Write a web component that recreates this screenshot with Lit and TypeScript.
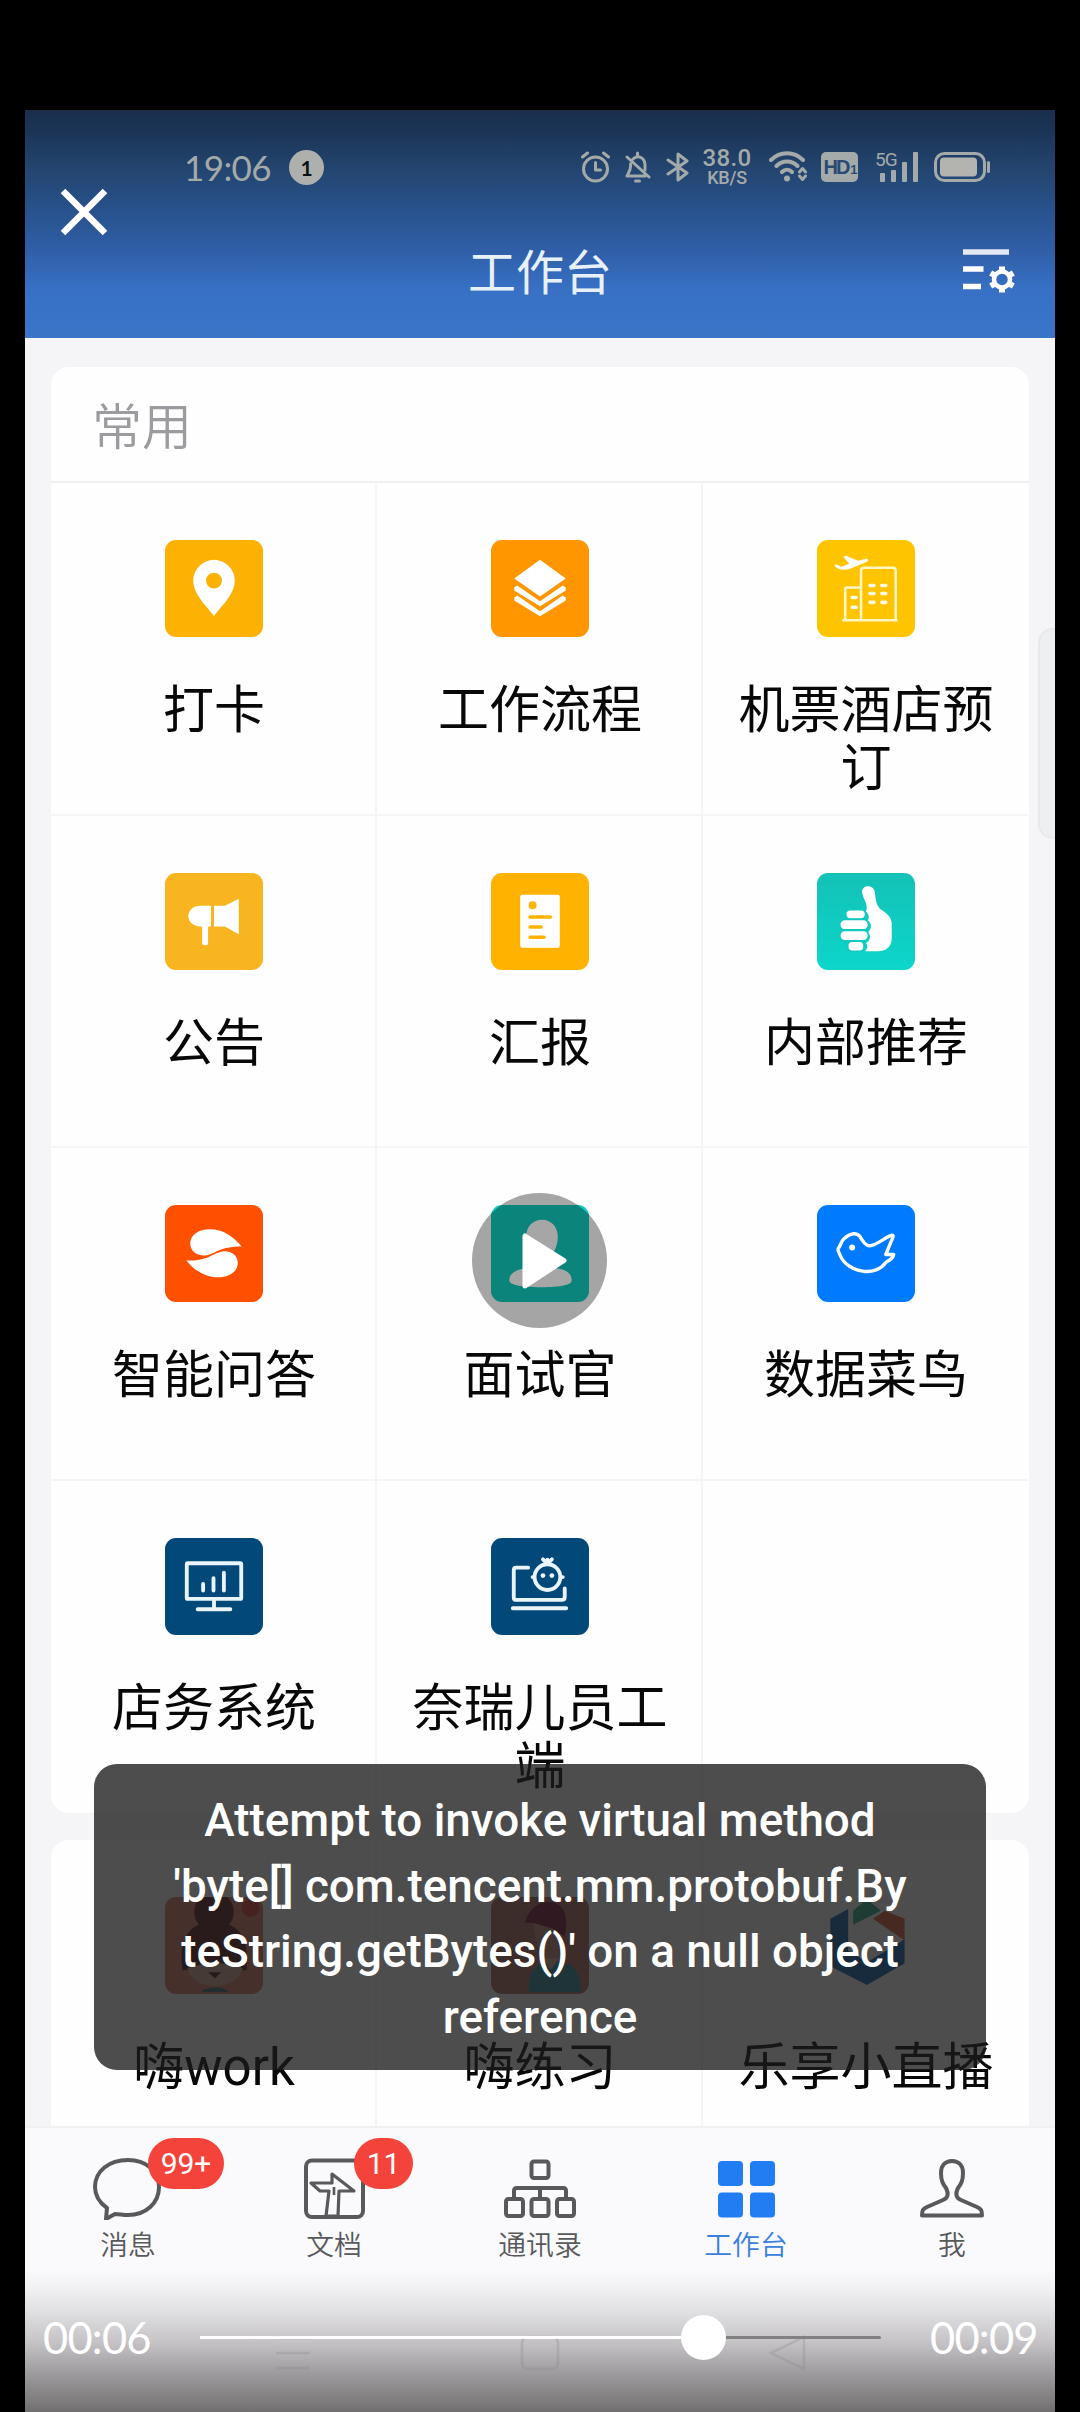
import { LitElement, html, svg, css, nothing, type SVGTemplateResult } from "lit";
import { customElement, property } from "lit/decorators.js";

type App = { label: string; bg: string; art: SVGTemplateResult };

const pin = svg`<path fill="#fff" fill-rule="evenodd" d="M49 77C44 69 28 56 28 41a21 21 0 0 1 42 0C70 56 54 69 49 77ZM49 33a8 8 0 1 0 0 16a8 8 0 0 0 0-16Z"/>`;
const layers = svg`<g fill="#fff"><path d="M49 20 75 39 49 57 23 39Z"/><path d="M23 48l3-2 23 16 23-16 3 2v3L49 67 23 51Z"/><path d="M23 58l3-2 23 16 23-16 3 2v3L49 77 23 61Z"/></g>`;
const hotel = svg`<g fill="none" stroke="#fff6c4" stroke-width="2.6"><path d="M44 80V31q0-3 3-3h29q3 0 3 3v49M28 80V50q0-2 2-2h14M25 81h56"/><path stroke="#fffbe6" stroke-width="3.6" stroke-linecap="round" d="M53 46h4M65 46h4M53 54h4M65 54h4M53 63h4M65 63h4M35 58h4M35 68h4"/></g><path fill="#fff" d="M17 25l3 0 4 2 8-3-6-7 3-1 12 5 8-2c2 0 3 1 1 3L33 29c-8 2-14 1-16-4Z"/>`;
const horn = svg`<g fill="#fff"><path d="M46 33v21H35c-7 0-12-5-12-10.500S28 33 35 33Z"/><path d="M49 33h11l14-7v36l-14-8H49Z"/><rect x="37" y="52" width="6" height="21" rx="2"/></g>`;
const report = svg`<rect x="29" y="22" width="40" height="53.500" rx="2" fill="#fff"/><g stroke="#fdb300" stroke-width="3.600" stroke-linecap="round"><path d="M39 44.500h20.500M39 54.500h11M39 65h14"/></g><circle cx="41.500" cy="32.500" r="4" fill="#fdb300"/>`;
const thumb = svg`<g fill="#fff"><path d="M45 19c0-7 12-8 13 1 1 8 1 12 6 17 8 5 11 9 11 15v14c0 8-5 13-14 13H48c3-3 3-6 1-8 5-4 5-8 2-11 4-4 4-9 0-12 2-4 0-7-2-9 3-7-3-12-4-20Z"/></g><g fill="#fff" stroke="#11c9be" stroke-width="1.600"><rect x="28.500" y="37" width="20" height="9.500" rx="4.500"/><rect x="22.500" y="47" width="29" height="10.500" rx="5"/><rect x="22.500" y="58" width="29" height="10.500" rx="5"/><rect x="30.500" y="69" width="16.500" height="10" rx="4.500"/></g>`;
const swoosh = svg`<g fill="#fff"><path d="M77 42C69 32 58 24.500 45 24.500c-12 0-20 6-20 14.500 0 8 7 12.500 15 12 10-1 14-9 37-9Z"/><path d="M21 56c8 10 19 17 32 17 12 0 20-6 20-14.500C73 50 65 46 58 47c-10 1-14 10-37 9Z"/></g>`;
const person = svg`<g fill="#fff"><path d="M51 15c-10 0-16 8-16 17 0 12 6 20 9 24 2 5-3 7-10 8-10 2-16 5-16 12 0 5 12 7 32 7s31-2 31-7c0-7-6-11-16-12-7-1-10-3-8-8 4-5 10-13 10-24 0-9-6-17-16-17Z"/></g>`;
const bird = svg`<path fill="none" stroke="#fff" stroke-width="3.400" stroke-linejoin="round" d="M21 44c2-2 3-8 6-10 5-5 12-7 16-2 3 5 6 10 11 9 8-2 14-8 20-10 2-1 3 0 2 2l-7 17 8 0c0 3-3 5-8 8-5 7-14 10-22 9-11-1-21-8-24-16-1-3-3-4-2-7Z"/><circle cx="35" cy="43" r="3" fill="#fff"/>`;
const monitor = svg`<g fill="none" stroke="#e9f5fb" stroke-width="3.900" stroke-linecap="round"><rect x="21.500" y="25.500" width="55" height="36" rx="1"/><path d="M49 62v9M32.500 72h33M38 46.500v6.500M48.500 40.500v12.500M59 35v18"/></g>`;
const laptop = svg`<g fill="none" stroke="#e9f5fb" stroke-width="3.900" stroke-linecap="round"><path d="M37 30H25q-2.500 0-2.500 2.500V60q0 2.500 2.500 2.500h46q3 0 3-3V51M21.500 71h54"/><circle cx="56.500" cy="39.500" r="13"/><path d="M56.500 26l-4.500-4.500M56.500 26l4.500-4.500M56.500 25v-3M41.500 39.500h1M71 39.500h1" /></g><circle cx="52" cy="38" r="2.400" fill="#e9f5fb"/><circle cx="61" cy="38" r="2.400" fill="#e9f5fb"/>`;
const girl = svg`<circle cx="86" cy="11" r="9" fill="#e03a30"/><circle cx="49" cy="15" r="20" fill="#5a1c1c"/><path fill="#5a1c1c" d="M17 74C12 35 30 25 49 25s37 10 33 49Z"/><path fill="#d8a890" d="M22 72q28-10 56 0c-3 11-14 18-28 18s-25-7-28-18Z"/><path fill="#4a1c1c" d="M43 76h13l-6 6Z"/><path fill="#3f6f6c" d="M36 96c4-6 24-6 28 0Z"/>`;
const coach = svg`<path fill="#c98f7c" d="M42 26h26v40H50Z"/><path fill="#7c1634" d="M34 26C38 8 56 0 68 8c10 8 8 22 6 32l-12-8-20-6Z"/><path fill="#2b8fa0" d="M38 96c-2-16 4-24 14-30h20c14 4 18 14 18 30Z"/><path fill="#d8a890" d="M52 62h16l-8 12Z"/>`;
const hexa = svg`<path fill="#0a64b8" d="M13 22l18-10v42l19 12 38-23v24L50 89 13 70Z"/><path fill="#2bb28a" d="M36 14 50 2l14 12-28 14Z"/><path fill="#e0603c" d="M56 22 68 14l20 8v22Z"/>`;

const common: App[] = [
  { label: "打卡", bg: "#fdb203", art: pin },
  { label: "工作流程", bg: "#ff9600", art: layers },
  { label: "机票酒店预订", bg: "#ffc400", art: hotel },
  { label: "公告", bg: "#f8b51f", art: horn },
  { label: "汇报", bg: "#ffb200", art: report },
  { label: "内部推荐", bg: "linear-gradient(#14c1b6, #0cd6cb)", art: thumb },
  { label: "智能问答", bg: "#ff5000", art: swoosh },
  { label: "面试官", bg: "#11ccbf", art: person },
  { label: "数据菜鸟", bg: "#007bff", art: bird },
  { label: "店务系统", bg: "#024879", art: monitor },
  { label: "奈瑞儿员工端", bg: "#024879", art: laptop },
];
const more: App[] = [
  { label: "嗨work", bg: "#d97c6a", art: girl },
  { label: "嗨练习", bg: "#b07060", art: coach },
  { label: "乐享小直播", bg: "#ffffff", art: hexa },
];

@customElement("app-tile")
class AppTile extends LitElement {
  @property({ attribute: false }) app?: App;
  static styles = css`
    :host { display: flex; flex-direction: column; align-items: center; box-sizing: border-box; padding: 57px 28px 0 30px; }
    .icon { width: 98px; height: 97px; border-radius: 11px; overflow: hidden; flex: none; }
    svg { display: block; width: 98px; height: 97px; }
    .label { width: 264px; margin-top: 45px; text-align: center; word-break: break-all; font-family: Roboto, "Noto Sans CJK SC", sans-serif; font-weight: 400; font-size: 51px; line-height: 58px; color: #080808; }
  `;
  render() {
    return this.app
      ? html`<div class="icon" style="background:${this.app.bg}"><svg viewBox="0 0 98 98">${this.app.art}</svg></div>
          <div class="label">${this.app.label}</div>`
      : nothing;
  }
}

@customElement("status-bar")
class StatusBar extends LitElement {
  static styles = css`
    :host { display: flex; align-items: center; height: 116px; padding: 0 64px 2px 159px; box-sizing: border-box; color: #a4aaa9; }
    .time { font: 400 35px/40px Lato, sans-serif; letter-spacing: -0.600px; width: 105px; }
    .count { width: 35px; height: 35px; border-radius: 50%; background: #aeb0ad; color: #0c1116; font: 700 21px/35px Lato, sans-serif; text-align: center; }
    .right { margin-left: auto; display: flex; align-items: center; }
    svg { display: block; fill: none; stroke: #a4aaa9; stroke-width: 3; stroke-linecap: round; stroke-linejoin: round; flex: none; }
    .alarm { margin-right: 15px; }
    .bell { margin-right: 15px; }
    .bt { margin-right: 12px; }
    .speed { width: 50px; text-align: center; font: 500 24px/24px Roboto, sans-serif; margin-right: 17px; display: flex; flex-direction: column; align-items: center; }
    .fast { letter-spacing: 0.300px; line-height: 22px; }
    .unit { font-size: 18px; line-height: 18px; letter-spacing: -0.300px; }
    .wifi { margin-right: 14px; }
    .hd { width: 37px; height: 30px; border-radius: 5px; background: #a4aaa9; color: #2a4a73; font: 700 20px/30px "Liberation Sans", sans-serif; letter-spacing: -2px; display: flex; justify-content: center; margin-right: 17px; }
    .one { font-size: 13px; line-height: 35px; padding-left: 2px; }
    .net { display: flex; margin-right: 15px; }
    .g5 { font: 400 19px/15px Roboto, sans-serif; letter-spacing: -1px; width: 5px; white-space: nowrap; }
    .solid { fill: #a4aaa9; stroke: none; }
    .cell { fill: #b3b4b0; stroke: none; }
  `;
  render() {
    return html`
      <span class="time">19:06</span><span class="count">1</span>
      <div class="right">
        <svg class="alarm" width="29" height="32" viewBox="0 0 29 32"><circle cx="14.500" cy="18" r="12"/><path d="M14.500 11.500V19h5M1.500 6 6.500 2M27.500 6l-5-4"/></svg>
        <svg class="bell" width="26" height="32" viewBox="0 0 26 32"><path d="M8 8C13 3 20 7 20 14v5M5.500 13c1 5-2 9-3.500 12h18M2 6l22 20M12.500 2v2M10.500 30h4"/></svg>
        <svg class="bt" width="24" height="32" viewBox="0 0 24 32"><path d="M2 9l19 13-9 7V3l9 7L2 23"/></svg>
        <div class="speed"><div class="fast">38.0</div><div class="unit">KB/S</div></div>
        <svg class="wifi" width="38" height="32" viewBox="0 0 38 32"><path stroke-width="4" d="M2 9C11 0 25 0 34 9M7.500 15c6-6 15-6 21 0M13 21c3-3 7-3 10 0"/><path d="M30.500 21l3-3.500 3 3.500M30.500 25l3 3.500 3-3.500"/><circle class="solid" cx="18" cy="27.500" r="3"/></svg>
        <div class="hd">HD<span class="one">1</span></div>
        <div class="net"><span class="g5">5G</span>
          <svg width="39" height="30" viewBox="0 0 39 30"><g class="solid"><rect x="0" y="21" width="5" height="9" rx="1"/><rect x="11" y="18" width="5" height="12" rx="1"/><rect x="22" y="10" width="5" height="20" rx="1"/><rect x="33" y="0" width="5" height="30" rx="1"/></g></svg></div>
        <svg width="57" height="30" viewBox="0 0 57 30"><rect x="1.500" y="1.500" width="49" height="27" rx="9"/><rect class="cell" x="6" y="5.500" width="37" height="19" rx="4"/><rect class="solid" x="53" y="9" width="3" height="12" rx="1.500"/></svg>
      </div>`;
  }
}

const tabs = [
  { label: "消息", badge: "99+", cls: "wide", art: svg`<path d="M37 2C55 2 68 13 68 29S55 57 37 57c-5 0-9-1-13-1l-9 5 1-11C9 45 4 38 4 29 4 13 18 2 37 2Z"/>` },
  { label: "文档", badge: "11", cls: "", art: svg`<rect x="9" y="2.500" width="57" height="56.500" rx="6"/><path stroke-width="3.200" d="M35 16 57 33H42l-1 25H29l3-25h-9l-9-8H35Z"/><path stroke-width="2.600" d="M37 29v8"/>` },
  { label: "通讯录", badge: "", cls: "", art: svg`<rect x="28.500" y="3.500" width="17" height="16.500" rx="2.500"/><path d="M11 40v-7q0-3 3-3h46q3 0 3 3v7M37 30v10"/><rect x="3" y="41" width="17" height="17" rx="2.500"/><rect x="28.500" y="41" width="17" height="17" rx="2.500"/><rect x="54" y="41" width="17" height="17" rx="2.500"/>` },
  { label: "工作台", badge: "", cls: "on", art: svg`<g fill="#227cf2" stroke="none"><rect x="9" y="3" width="25" height="25" rx="4"/><rect x="41" y="3" width="25" height="25" rx="4"/><rect x="9" y="34.500" width="25" height="25" rx="4"/><rect x="41" y="34.500" width="25" height="25" rx="4"/></g>` },
  { label: "我", badge: "", cls: "", art: svg`<path d="M37 3C29 3 26 9 26 15c0 8 2 11 5 15 3 6 2 10-3 12L12 49c-4 2-5 3-5 8.500h60C67 52 66 51 62 49L46 42c-5-2-6-6-3-12 3-4 5-7 5-15C48 9 45 3 37 3Z"/>` },
];

@customElement("app-root")
class AppRoot extends LitElement {
  static styles = css`
    :host { display: block; position: relative; width: 1080px; height: 2412px; box-sizing: border-box; padding: 110px 25px 0; background: #000; overflow: hidden; font-family: "Noto Sans CJK SC", sans-serif; font-weight: 350; }
    .screen { display: flex; flex-direction: column; height: 2302px; background: #f5f5f8; }
    .head { flex: none; height: 228px; background: linear-gradient(#1a2e4b 0, #1c3557 10%, #23456f 26%, #28528c 44%, #305fa8 62%, #3770c4 78%, #3a75c8 100%); }
    .bar { display: flex; align-items: center; height: 94px; margin-top: -2px; padding: 0 39px 0 92px; }
    .title { flex: 1; text-align: center; font-size: 48px; font-weight: 400; line-height: 60px; padding-bottom: 5px; color: #e8f0f8; }
    .feed { flex: 1; min-height: 0; overflow: hidden; display: flex; flex-direction: column; gap: 27px; padding: 29px 26px 0; }
    .card { flex: none; background: #fefefe; border-radius: 18px; overflow: hidden; }
    .sub { height: 116px; display: flex; align-items: center; padding-left: 41px; font-size: 50px; line-height: 60px; color: #9c9ca0; border-bottom: 2px solid #f0f0f0; box-sizing: border-box; padding-bottom: 2px; }
    .grid { display: grid; grid-template-columns: 326px 326px 326px; grid-auto-rows: 332.500px; }
    .tile { border-right: 2px solid #f5f5f5; border-bottom: 2px solid #f5f5f5; }
    .tile:nth-child(3n) { border-right-color: transparent; }
    .tile:nth-child(n + 10) { border-bottom-color: transparent; }
    .tabs { flex: none; height: 144px; display: grid; grid-template-columns: repeat(5, 206px); background: #fafafc; border-top: 2px solid #f1f1f4; box-sizing: border-box; }
    .tab { position: relative; display: flex; flex-direction: column; align-items: center; padding-top: 30px; color: #58595b; font-size: 27.800px; line-height: 36px; }
    .tab svg { width: 74px; height: 62px; fill: none; stroke: #58595b; stroke-width: 4; stroke-linejoin: round; margin-bottom: 5px; flex: none; }
    .on { color: #3a80dd; }
    .badge { position: absolute; top: 10px; left: 123px; width: 59px; height: 51px; border-radius: 26px; background: #f4433b; color: #fff; font: 400 30px/52px Roboto, sans-serif; text-align: center; }
    .wide .badge { width: 76px; }
    .system { flex: none; height: 142px; background: linear-gradient(#fafafc 0, #f3f2f5 10%, #e2e1e3 28%, #c6c4c6 50%, #a09ea0 71%, #7f7d7e 92%, #706e6f 100%); display: flex; justify-content: space-between; align-items: center; padding: 24px 248px 0; box-sizing: border-box; }
    .system svg { width: 40px; height: 36px; fill: none; stroke: #8a888b; stroke-opacity: 0.300; stroke-width: 2.500; }
    .side { position: absolute; top: 628px; left: 1038px; width: 17px; height: 211px; box-sizing: border-box; border: 2px solid #e8e8ea; border-right: 0; border-radius: 15px 0 0 15px; background: #eeeff1; }
    .toast { position: absolute; top: 1764px; left: 94px; width: 892px; height: 306px; box-sizing: border-box; padding-top: 24px; border-radius: 23px; background: rgba(27, 27, 27, 0.780); color: #fff; font: 500 45.800px/65.700px Roboto, sans-serif; text-align: center; white-space: nowrap; }
    .close { position: absolute; top: 187px; left: 59px; width: 50px; height: 50px; }
    .play { position: absolute; top: 1193px; left: 472px; width: 135px; height: 135px; }
    .control { position: absolute; top: 2308px; left: 25px; width: 1030px; height: 58px; box-sizing: border-box; display: flex; align-items: center; padding: 0 16px 0 18px; color: #fff; font: 400 43.500px/58px Lato, sans-serif; letter-spacing: -0.800px; }
    .clock { width: 109px; flex: none; }
    .track { flex: 1; margin: 0 49px 0 48px; height: 3px; border-radius: 2px; background: #828182; display: flex; align-items: center; }
    .done { width: 504px; height: 3px; background: #fff; display: flex; align-items: center; justify-content: flex-end; }
    .knob { width: 45px; height: 45px; border-radius: 50%; background: #fff; flex: none; margin-right: -22px; }
  `;
  render() {
    return html`
      <div class="screen">
        <div class="head">
          <status-bar></status-bar>
          <div class="bar">
            <div class="title">工作台</div>
            <svg width="53" height="46" viewBox="0 0 53 46"><path stroke="#e3e8f2" stroke-width="5.500" d="M0 4h46"/><path stroke="#fff" stroke-width="5.500" d="M0 21h20.500M0 38.500h18"/><circle cx="39" cy="31.500" r="8" fill="none" stroke="#fff" stroke-width="4.500"/><g stroke="#fff" stroke-width="6"><path d="M39 18.500v4M39 40.500v4M27.700 25l3.500 2M46.800 36l3.500 2M27.700 38l3.500-2M46.800 27l3.500-2"/></g></svg>
          </div>
        </div>
        <div class="feed">
          <div class="card">
            <div class="sub">常用</div>
            <div class="grid">${common.map((a) => html`<app-tile class="tile" .app=${a}></app-tile>`)}<div></div></div>
          </div>
          <div class="card">
            <div class="grid">${more.map((a) => html`<app-tile class="tile" .app=${a}></app-tile>`)}</div>
          </div>
        </div>
        <div class="tabs">
          ${tabs.map((t) => html`<div class="tab ${t.cls}"><svg viewBox="0 0 74 62">${t.art}</svg>${t.label}${t.badge ? html`<span class="badge">${t.badge}</span>` : nothing}</div>`)}
        </div>
        <div class="system">
          <svg viewBox="0 0 40 36"><path d="M3 3h34M3 18h34M3 33h34"/></svg>
          <svg viewBox="0 0 40 36"><rect x="2" y="2" width="36" height="32" rx="6"/></svg>
          <svg viewBox="0 0 40 36"><path d="M37 2v32L4 18Z"/></svg>
        </div>
      </div>
      <div class="side"></div>
      <div class="toast">Attempt to invoke virtual method<br>'byte[] com.tencent.mm.protobuf.By<br>teString.getBytes()' on a null object<br>reference</div>
      <svg class="close" viewBox="0 0 50 50"><path stroke="#fff" stroke-width="6.500" d="M4 4l42 42M46 4 4 46"/></svg>
      <svg class="play" viewBox="0 0 135 135"><circle cx="67.500" cy="67.500" r="67.500" fill="#000" fill-opacity=".350"/><path fill="#fff" stroke="#fff" stroke-width="5" stroke-linejoin="round" d="M53 43v50l39-25.500Z"/></svg>
      <div class="control">
        <span class="clock">00:06</span>
        <div class="track"><div class="done"><div class="knob"></div></div></div>
        <span class="clock">00:09</span>
      </div>`;
  }
}
